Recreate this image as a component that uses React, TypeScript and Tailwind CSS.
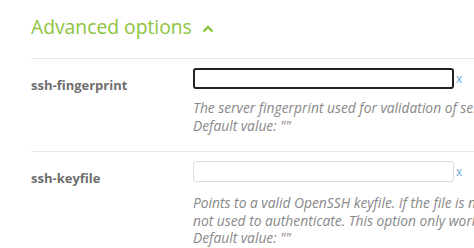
import React from "react";

const font = { fontFamily: '"Open Sans", "DejaVu Sans", sans-serif' };

function Option({
  name,
  focused,
  lines,
}: {
  name: string;
  focused?: boolean;
  lines: string[];
}) {
  return (
    <div className="flex border-t border-[#e6e6e6] pt-[9px] pb-[16px]">
      <div className="w-[162px] shrink-0 pt-[8px] text-[13px] font-bold text-[#6e6e6e]">
        {name}
      </div>
      <div className="min-w-0 flex-1">
        <div className="flex items-center">
          <div
            className={
              focused
                ? "h-[21px] w-[261px] shrink-0 rounded-[3px] border-2 border-[#222] bg-white"
                : "h-[21px] w-[261px] shrink-0 rounded-[3px] border border-[#dcdcdc] bg-white"
            }
          />
          <span className="ml-[2px] text-[12px] text-[#6aa8d8]">x</span>
        </div>
        <div
          className={
            focused
              ? "mt-[10px] whitespace-nowrap text-[13.8px] italic leading-[18px] text-[#888]"
              : "mt-[12px] whitespace-nowrap text-[13.8px] italic leading-[17.5px] text-[#888]"
          }
        >
          {lines.map((l, i) => (
            <div key={i}>{l}</div>
          ))}
        </div>
      </div>
    </div>
  );
}

export default function App() {
  return (
    <div className="h-[248px] w-[474px] overflow-hidden bg-white" style={font}>
      <div className="pl-[31px]">
        <div className="flex h-[58px] items-center gap-[10px] pb-[3px]">
          <span className="text-[19.3px] text-[#8cc43c]">Advanced options</span>
          <svg width="12" height="8" viewBox="0 0 12 8" className="mt-[2px]">
            <path d="M1.5 6.5 L6 2 L10.5 6.5" fill="none" stroke="#8cc43c" strokeWidth="2.4" />
          </svg>
        </div>
        <Option
          name="ssh-fingerprint"
          focused
          lines={["The server fingerprint used for validation of server identity.", 'Default value: ""']}
        />
        <Option
          name="ssh-keyfile"
          lines={[
            "Points to a valid OpenSSH keyfile. If the file is not found, it is",
            "not used to authenticate. This option only works with ssh.",
            'Default value: ""',
          ]}
        />
      </div>
    </div>
  );
}
